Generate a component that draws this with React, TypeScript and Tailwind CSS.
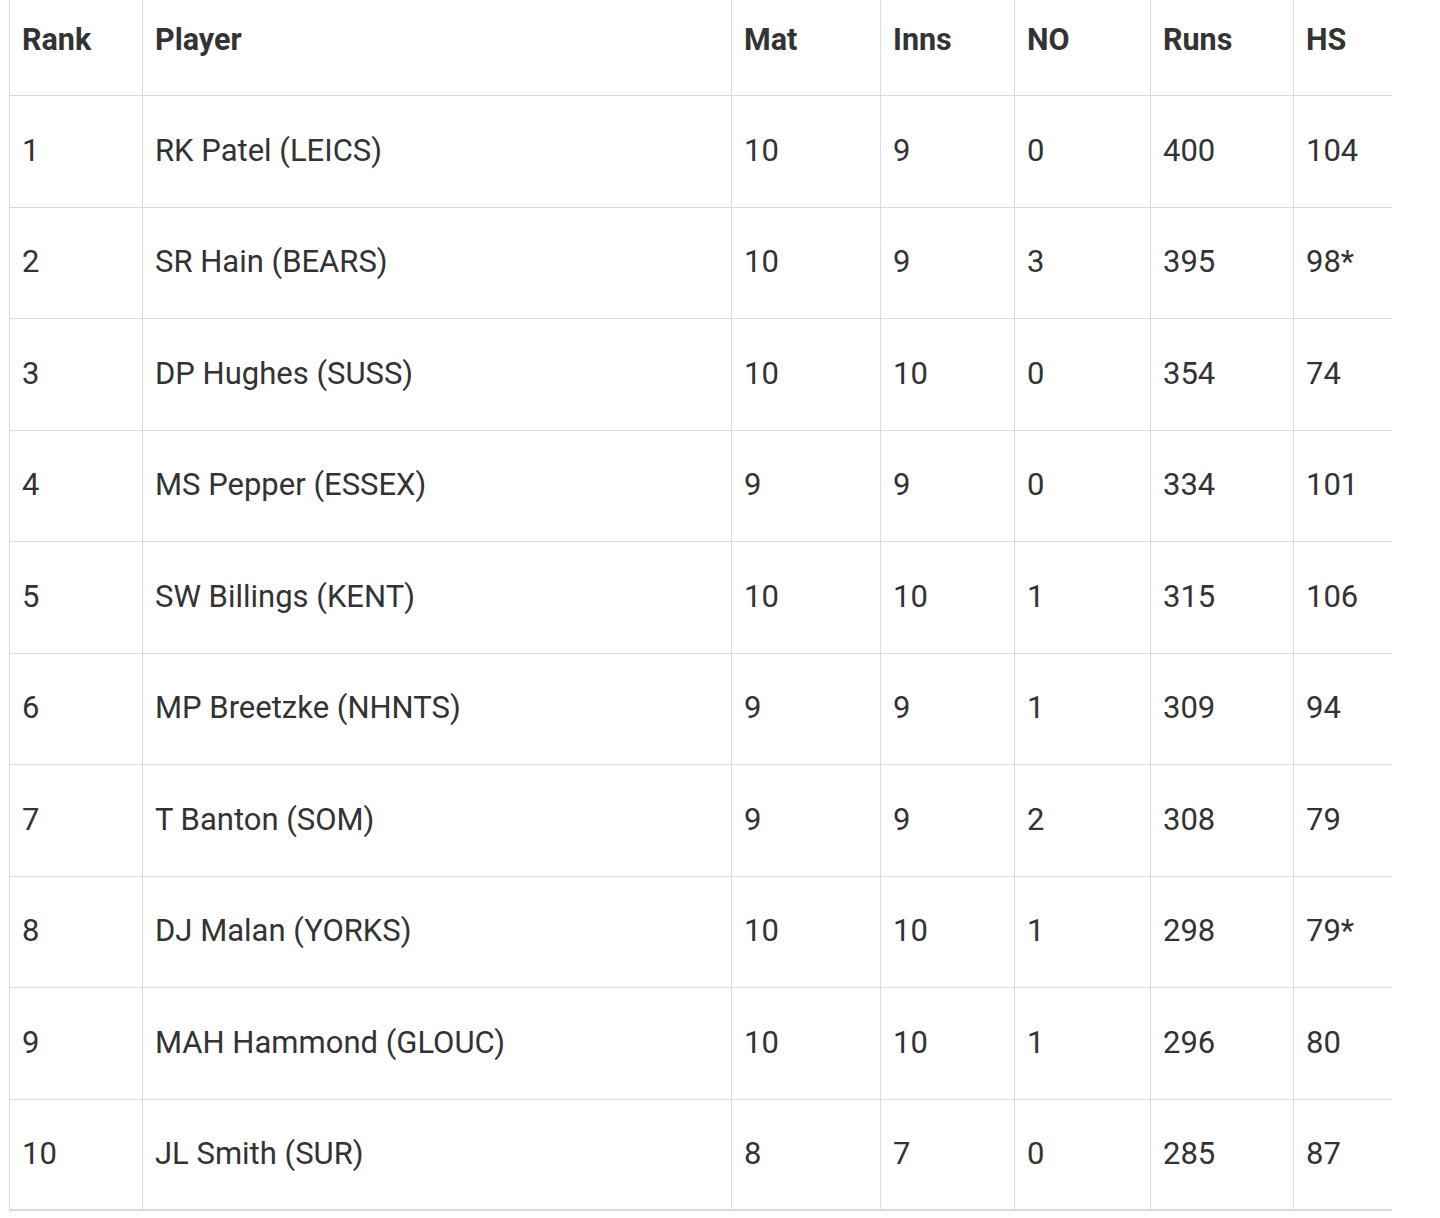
import React from "react";

const rows = [
  ["1", "RK Patel (LEICS)", "10", "9", "0", "400", "104"],
  ["2", "SR Hain (BEARS)", "10", "9", "3", "395", "98*"],
  ["3", "DP Hughes (SUSS)", "10", "10", "0", "354", "74"],
  ["4", "MS Pepper (ESSEX)", "9", "9", "0", "334", "101"],
  ["5", "SW Billings (KENT)", "10", "10", "1", "315", "106"],
  ["6", "MP Breetzke (NHNTS)", "9", "9", "1", "309", "94"],
  ["7", "T Banton (SOM)", "9", "9", "2", "308", "79"],
  ["8", "DJ Malan (YORKS)", "10", "10", "1", "298", "79*"],
  ["9", "MAH Hammond (GLOUC)", "10", "10", "1", "296", "80"],
  ["10", "JL Smith (SUR)", "8", "7", "0", "285", "87"],
];

const headers = ["Rank", "Player", "Mat", "Inns", "NO", "Runs", "HS"];

const gridCols = "grid grid-cols-[133px_589px_149px_134px_136px_143px_160px]";

export default function App() {
  return (
    <div className="min-h-[1218px] bg-white font-['Roboto','Liberation_Sans',sans-serif] text-[#333333]">
      <div className="ml-[9px] w-[1383px] overflow-hidden">
        <div className="w-[1444px]">
          <div className={`${gridCols} h-[96px]`}>
            {headers.map((h) => (
              <div
                key={h}
                className="flex items-start border-l border-b border-[#dadada] pl-[12px] pt-[20px] text-[30.5px] font-bold leading-[40px]"
              >
                {h}
              </div>
            ))}
          </div>
          {rows.map((r, i) => (
            <div
              key={r[0]}
              className={`${gridCols} ${i % 2 === 0 ? "h-[112px]" : "h-[111px]"}`}
            >
              {r.map((c, j) => (
                <div
                  key={j}
                  className={`flex items-center border-l border-[#dadada] pl-[12px] pb-[2px] text-[31px] leading-[40px] ${
                    i === rows.length - 1 ? "border-b-2" : "border-b"
                  }`}
                >
                  {c}
                </div>
              ))}
            </div>
          ))}
        </div>
      </div>
    </div>
  );
}
